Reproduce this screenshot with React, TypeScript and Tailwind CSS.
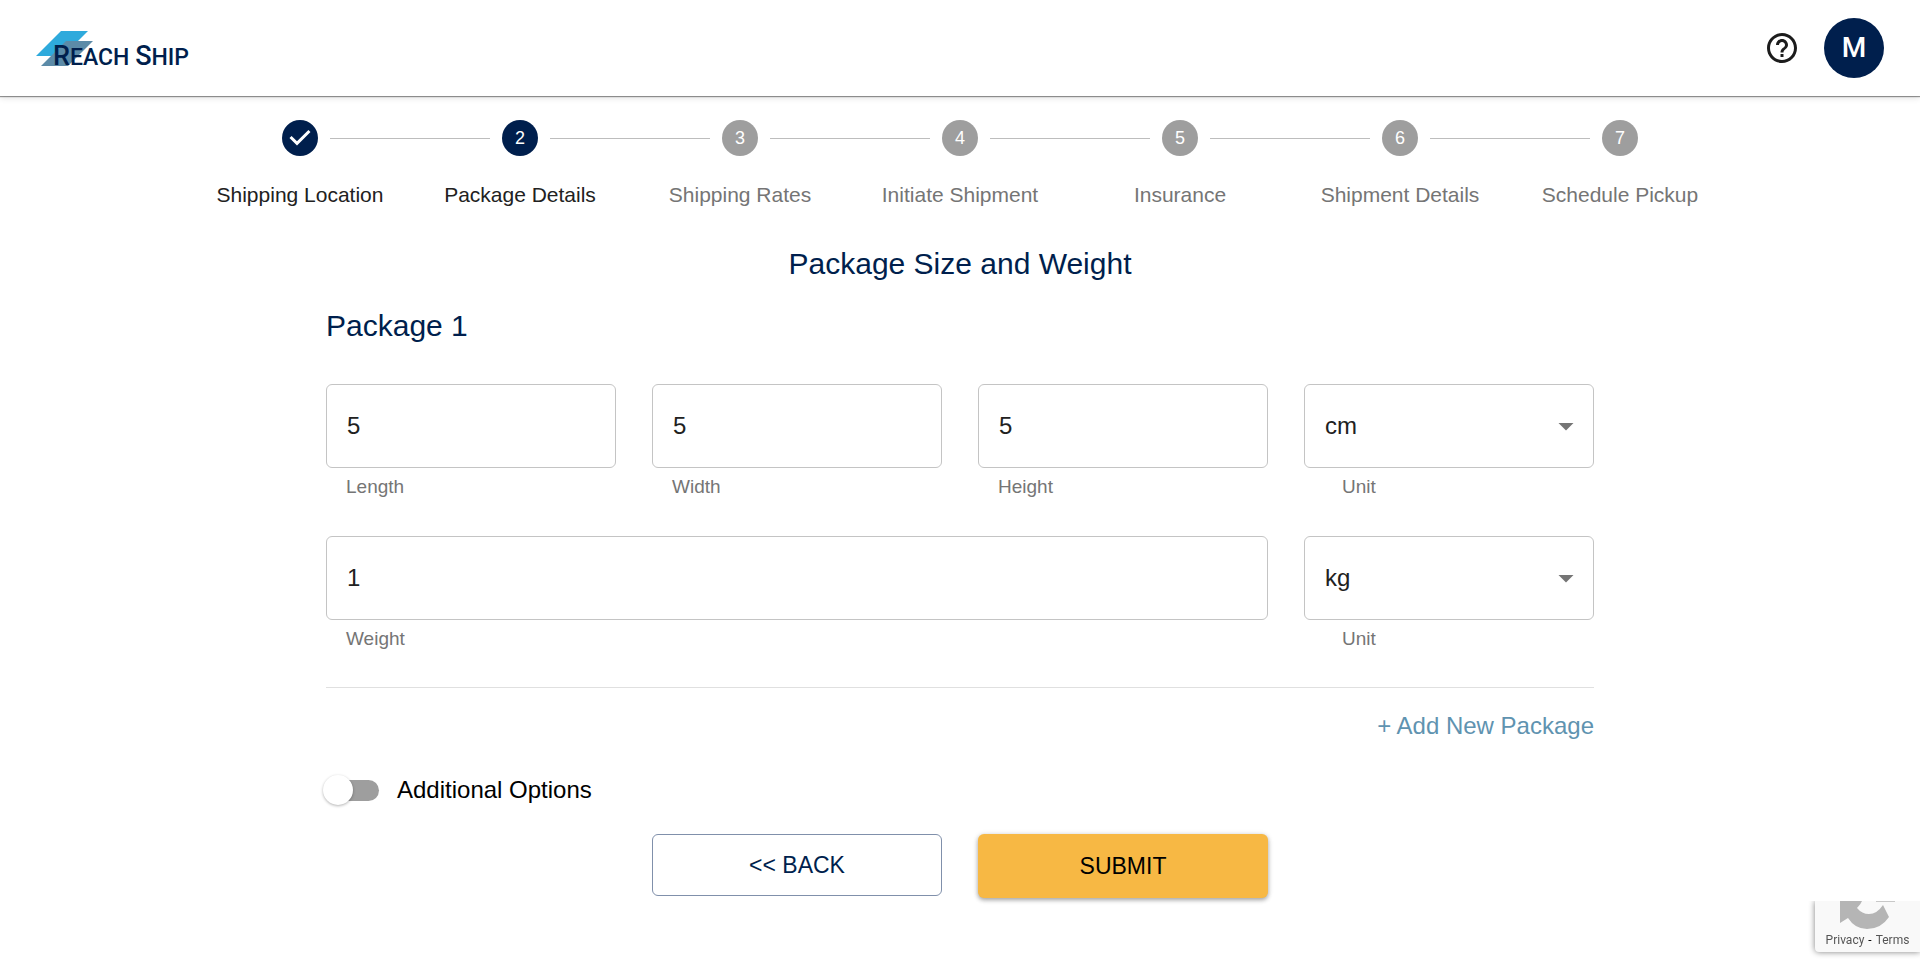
import { useState } from 'react';
import { MdArrowDropDown, MdHelpOutline } from 'react-icons/md';

const STEPS = [
  'Shipping Location',
  'Package Details',
  'Shipping Rates',
  'Initiate Shipment',
  'Insurance',
  'Shipment Details',
  'Schedule Pickup',
];

const ACTIVE_STEP = 1;

const Logo = () => (
  <svg viewBox="0 0 156 48" className="h-12 w-[156px]" role="img" aria-label="ReachShip">
    <path d="M25 7h27L27 32H0z" fill="#2eaadc" />
    <path d="M30 17h27L32 42H5z" fill="#5c8ba8" />
    <text x="17" y="41" fill="#001f4d" fontFamily="Roboto, sans-serif" fontWeight="500" fontSize="23">
      <tspan fontSize="27">R</tspan>EACH{' '}
      <tspan fontSize="27">S</tspan>HIP
    </text>
  </svg>
);

const Header = () => (
  <header className="relative flex h-24 items-center justify-between bg-white px-9 shadow-[0_1px_1px_rgba(0,0,0,0.4),0_2px_6px_rgba(0,0,0,0.12)]">
    <a href="#home">
      <Logo />
    </a>
    <div className="flex items-center gap-6">
      <button type="button" aria-label="Help" className="text-[#1c1c1c]">
        <MdHelpOutline size={36} />
      </button>
      <button
        type="button"
        className="flex size-[60px] items-center justify-center rounded-full bg-[#001f4d] font-[Roboto,sans-serif] text-[28px] font-medium text-white"
      >
        M
      </button>
    </div>
  </header>
);

const StepIcon = ({ index }: { index: number }) => {
  if (index < ACTIVE_STEP) {
    return (
      <svg viewBox="0 0 24 24" className="size-9 fill-[#001f4d]" aria-hidden="true">
        <path d="M12 0a12 12 0 1 0 0 24 12 12 0 0 0 0-24zm-2 17l-5-5 1.4-1.4 3.6 3.6 7.6-7.6L19 8l-9 9z" />
      </svg>
    );
  }
  return (
    <span
      className={`flex size-9 items-center justify-center rounded-full text-lg text-white ${
        index === ACTIVE_STEP ? 'bg-[#001f4d]' : 'bg-[#9e9e9e]'
      }`}
    >
      {index + 1}
    </span>
  );
};

const Stepper = () => (
  <ol className="mx-auto flex max-w-[1540px] pt-6">
    {STEPS.map((label, index) => (
      <li key={label} className="flex-1">
        <div className="flex items-center gap-3">
          <span className={`h-px flex-1 ${index > 0 ? 'bg-[#bdbdbd]' : ''}`} />
          <StepIcon index={index} />
          <span className={`h-px flex-1 ${index < STEPS.length - 1 ? 'bg-[#bdbdbd]' : ''}`} />
        </div>
        <p
          className={`mt-6 text-center text-[21px] leading-[30px] whitespace-nowrap ${
            index <= ACTIVE_STEP ? 'text-[#212121]' : 'text-[#757575]'
          }`}
        >
          {label}
        </p>
      </li>
    ))}
  </ol>
);

type TextFieldProps = { id: string; label: string; initial: string; className?: string };

const TextField = ({ id, label, initial, className = '' }: TextFieldProps) => {
  const [value, setValue] = useState(initial);
  return (
    <div className={`flex flex-col ${className}`}>
      <input
        id={id}
        value={value}
        onChange={(e) => setValue(e.target.value)}
        className="h-[84px] w-full rounded-md border border-[#c4c4c4] px-5 text-2xl text-[#212121]"
      />
      <label htmlFor={id} className="mt-1 px-5 text-[19px] leading-[30px] text-[#757575]">
        {label}
      </label>
    </div>
  );
};

type SelectFieldProps = { id: string; options: string[] };

const SelectField = ({ id, options }: SelectFieldProps) => (
  <div className="flex flex-col">
    <div className="relative">
      <select
        id={id}
        className="h-[84px] w-full appearance-none rounded-md border border-[#c4c4c4] px-5 text-2xl text-[#212121]"
      >
        {options.map((option) => (
          <option key={option}>{option}</option>
        ))}
      </select>
      <MdArrowDropDown
        size={36}
        className="pointer-events-none absolute top-6 right-2.5 text-[#757575]"
      />
    </div>
    <label htmlFor={id} className="mt-1 px-[38px] text-[19px] leading-[30px] text-[#757575]">
      Unit
    </label>
  </div>
);

const OptionsSwitch = () => (
  <label className="flex w-fit items-center gap-[18px] text-2xl text-black">
    <span className="relative flex h-[21px] w-[53px] items-center rounded-full bg-[#9e9e9e]">
      <input type="checkbox" role="switch" className="peer absolute inset-0 m-0 cursor-pointer opacity-0" />
      <span className="pointer-events-none -ml-[3px] size-[30px] shrink-0 rounded-full bg-white shadow-[0_1px_3px_rgba(0,0,0,0.3)] peer-checked:ml-7" />
    </span>
    Additional Options
  </label>
);

const RecaptchaBadge = () => (
  <div className="fixed right-0 bottom-[21px] h-[51px] w-[105px] [clip-path:inset(0_0_-12px_-12px)]">
    <div className="flex h-full flex-col items-center justify-between rounded-bl-sm bg-[#f9f9f9] pb-1 shadow-[0_0_6px_#808080]">
      <svg viewBox="0 0 60 28" className="h-7 w-[60px]" aria-hidden="true">
        <path
          d="M2 0h22q-1 3-5 7q5 6 12 6q8 0 14-9l6 12q-8 12-22 12q-12 0-19-11L2 22z"
          fill="#b5b5b5"
        />
        <path d="M38 0h19v1H38z" fill="#c8c8c8" />
      </svg>
      <p className="flex gap-1 font-[Roboto,sans-serif] text-xs leading-4 text-[#555]">
        <a href="#privacy">Privacy</a>
        <span className="text-black">-</span>
        <a href="#terms">Terms</a>
      </p>
    </div>
  </div>
);

const App = () => {
  return (
    <div className="min-h-screen bg-white font-['Liberation_Sans',Arial,sans-serif]">
      <Header />
      <Stepper />
      <main className="mx-auto max-w-[1268px] pb-16">
        <h1 className="mt-9 text-center text-3xl text-[#001f4d]">Package Size and Weight</h1>
        <h2 className="mt-[26px] text-3xl text-[#001f4d]">Package 1</h2>
        <form onSubmit={(e) => e.preventDefault()}>
          <div className="mt-10 grid grid-cols-4 gap-x-9 gap-y-[34px]">
            <TextField id="length" label="Length" initial="5" />
            <TextField id="width" label="Width" initial="5" />
            <TextField id="height" label="Height" initial="5" />
            <SelectField id="size-unit" options={['cm', 'in']} />
            <TextField id="weight" label="Weight" initial="1" className="col-span-3" />
            <SelectField id="weight-unit" options={['kg', 'lb']} />
          </div>
          <hr className="mt-[33px] border-[#e0e0e0]" />
          <div className="mt-[22px] flex justify-end">
            <button type="button" className="text-2xl text-[#5f93b0]">
              + Add New Package
            </button>
          </div>
          <div className="mt-8">
            <OptionsSwitch />
          </div>
          <div className="mt-7 grid grid-cols-4 items-start gap-x-9">
            <button
              type="button"
              className="col-start-2 h-[62px] rounded-md border border-[#8090ab] text-[23px] text-[#001f4d]"
            >
              &lt;&lt; BACK
            </button>
            <button
              type="submit"
              className="h-16 rounded-md bg-[#f7b844] text-[23px] text-black shadow-[0_2px_4px_rgba(0,0,0,0.3),0_1px_6px_rgba(0,0,0,0.12)]"
            >
              SUBMIT
            </button>
          </div>
        </form>
      </main>
      <RecaptchaBadge />
    </div>
  );
};

export default App;
